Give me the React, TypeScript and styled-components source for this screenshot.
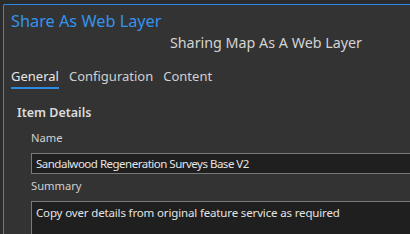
import React from 'react';
import styled, { createGlobalStyle } from 'styled-components';

const GlobalStyle = createGlobalStyle`
  html, body {
    margin: 0;
    padding: 0;
    background: #2b2b2b;
    overflow: hidden;
  }
  body {
    font-family: "Noto Sans", "Open Sans", sans-serif;
  }
`;

const Window = styled.div`
  margin: 4px 0 0 3px;
  height: 230px;
  background: #333333;
  border-top: 1px solid #2b8ae2;
  border-left: 1px solid #2b8ae2;
  border-top-left-radius: 2px;
  box-sizing: border-box;
  overflow: hidden;
`;

const Title = styled.div`
  color: #3494ec;
  font-size: 16.3px;
  line-height: 20px;
  padding: 6px 0 0 7px;
`;

const Subtitle = styled.div`
  color: #d4d4d4;
  font-size: 14.3px;
  line-height: 20px;
  text-align: right;
  padding-right: 48px;
  margin-top: 2px;
`;

const Tabs = styled.div`
  display: flex;
  gap: 10px;
  padding-left: 7px;
  margin-top: 14px;
`;

const Tab = styled.div<{ $active?: boolean }>`
  color: ${p => (p.$active ? '#e6e6e6' : '#d0d0d0')};
  font-size: 13px;
  line-height: 19px;
  padding-bottom: 1px;
  border-bottom: 2px solid ${p => (p.$active ? '#2b8ae2' : 'transparent')};
`;

const Content = styled.div`
  padding: 14px 0 0 13px;
`;

const SectionTitle = styled.div`
  color: #dcdcdc;
  font-size: 12.5px;
  font-weight: 600;
  line-height: 20px;
`;

const Field = styled.div`
  padding-left: 14px;
  padding-top: 3px;
`;

const Label = styled.div`
  color: #d0d0d0;
  font-size: 11.2px;
  line-height: 18px;
  margin: 3px 0 6px;
`;

const TextBox = styled.div`
  background: #1f1f1f;
  border: 1px solid #7a7a7a;
  border-right: none;
  color: #e4e4e4;
  font-size: 11.5px;
  letter-spacing: -0.5px;
  line-height: 19px;
  height: 19px;
  padding: 0 4px;
  white-space: nowrap;
`;

const TextArea = styled(TextBox)`
  letter-spacing: -0.15px;
  height: 60px;
  padding-top: 1px;
`;

export default function App() {
  return (
    <>
      <GlobalStyle />
      <Window>
        <Title>Share As Web Layer</Title>
        <Subtitle>Sharing Map As A Web Layer</Subtitle>
        <Tabs>
          <Tab $active>General</Tab>
          <Tab>Configuration</Tab>
          <Tab>Content</Tab>
        </Tabs>
        <Content>
          <SectionTitle>Item Details</SectionTitle>
          <Field>
            <Label>Name</Label>
            <TextBox>Sandalwood Regeneration Surveys Base V2</TextBox>
            <Label>Summary</Label>
            <TextArea>Copy over details from original feature service as required</TextArea>
          </Field>
        </Content>
      </Window>
    </>
  );
}
